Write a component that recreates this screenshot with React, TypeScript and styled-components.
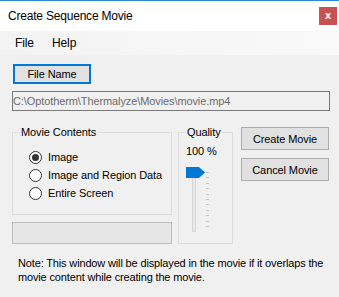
import React from 'react';
import styled, { createGlobalStyle } from 'styled-components';

const GlobalStyle = createGlobalStyle`
  html, body {
    margin: 0;
    padding: 0;
    background: #f0f0f0;
  }
`;

const Window = styled.div`
  width: 339px;
  height: 297px;
  background: #f0f0f0;
  font-family: "Liberation Sans", Arial, sans-serif;
  font-size: 11px;
  letter-spacing: -0.1px;
  color: #000;
  overflow: hidden;
`;

const TitleBar = styled.div`
  height: 30px;
  border-top: 1px solid #2b88d8;
  background: #fff;
  display: flex;
  align-items: center;
  justify-content: space-between;
  padding: 0 2px 0 8px;
`;

const Title = styled.span`
  font-size: 12px;
  letter-spacing: -0.2px;
  color: #000;
`;

const CloseButton = styled.div`
  width: 18px;
  height: 18px;
  background: #c75050;
  color: #fff;
  font-weight: bold;
  font-size: 11px;
  line-height: 16px;
  text-align: center;
  letter-spacing: 0;
`;

const MenuBar = styled.div`
  height: 24px;
  display: flex;
  align-items: center;
  padding-left: 6px;
  background: linear-gradient(to right, #f3f3f3, #f9f9f9);
`;

const MenuItem = styled.span`
  font-size: 12px;
  padding: 0 9px;
`;

const Content = styled.div`
  display: flex;
  flex-direction: column;
  align-items: flex-start;
  padding: 9px 9px 0 12px;
`;

const FileButton = styled.div`
  box-sizing: border-box;
  width: 78px;
  height: 20px;
  margin-left: 1px;
  border: 2px solid #0078d7;
  background: #e1e1e1;
  display: flex;
  align-items: center;
  justify-content: center;
`;

const PathBox = styled.div`
  box-sizing: border-box;
  width: 318px;
  height: 20px;
  margin-top: 7px;
  border: 1px solid #7a7a7a;
  color: #6d6d6d;
  display: flex;
  align-items: center;
  white-space: nowrap;
`;

const MainRow = styled.div`
  display: flex;
  align-items: flex-start;
  margin-top: 15px;
`;

const LeftColumn = styled.div`
  display: flex;
  flex-direction: column;
  width: 160px;
`;

const Group = styled.fieldset<{ h: number }>`
  box-sizing: border-box;
  margin: 0;
  padding: 0;
  min-inline-size: 0;
  height: ${(p) => p.h}px;
  border: 1px solid #dcdcdc;
`;

const Legend = styled.legend`
  margin-left: 7px;
  padding: 0 1px;
  line-height: 13px;
`;

const RadioList = styled.div`
  display: flex;
  flex-direction: column;
  padding: 9px 0 0 16px;
`;

const RadioRow = styled.div`
  display: flex;
  align-items: center;
  height: 18px;
  gap: 6px;
`;

const RadioCircle = styled.span<{ checked?: boolean }>`
  box-sizing: border-box;
  width: 13px;
  height: 13px;
  border: 1px solid #333;
  border-radius: 50%;
  background: #fff;
  display: flex;
  align-items: center;
  justify-content: center;
  &::after {
    content: '';
    display: ${(p) => (p.checked ? 'block' : 'none')};
    width: 7px;
    height: 7px;
    border-radius: 50%;
    background: #333;
  }
`;

const Progress = styled.div`
  box-sizing: border-box;
  height: 22px;
  margin-top: 7px;
  border: 1px solid #bcbcbc;
  background: #e6e6e6;
`;

const QualityGroup = styled(Group)`
  width: 55px;
  margin-left: 6px;
`;

const QualityBody = styled.div`
  display: flex;
  flex-direction: column;
  padding: 6px 0 0 7px;
`;

const Percent = styled.span`
  line-height: 13px;
`;

const Slider = styled.div`
  position: relative;
  width: 24px;
  height: 66px;
  margin-top: 9px;
`;

const Track = styled.div`
  position: absolute;
  left: 6px;
  top: 10px;
  box-sizing: border-box;
  width: 4px;
  height: 55px;
  background: #e7eaea;
  border: 1px solid #d6d6d6;
`;

const Thumb = styled.svg`
  position: absolute;
  left: 0;
  top: 0;
`;

const Ticks = styled.div`
  position: absolute;
  left: 20px;
  top: 5px;
  height: 55px;
  display: flex;
  flex-direction: column;
  justify-content: space-between;
`;

const Tick = styled.span`
  display: block;
  width: 3px;
  height: 1px;
  background: #c4c4c4;
`;

const ButtonColumn = styled.div`
  display: flex;
  flex-direction: column;
  gap: 8px;
  margin: 1px 0 0 8px;
`;

const ActionButton = styled.div`
  box-sizing: border-box;
  width: 88px;
  height: 23px;
  border: 1px solid #adadad;
  background: #e1e1e1;
  display: flex;
  align-items: center;
  justify-content: center;
`;

const Note = styled.p`
  margin: 12px 0 0 6px;
  line-height: 14px;
  white-space: nowrap;
  letter-spacing: -0.15px;
`;

const radios = ['Image', 'Image and Region Data', 'Entire Screen'];

export default function App() {
  return (
    <Window>
      <GlobalStyle />
      <TitleBar>
        <Title>Create Sequence Movie</Title>
        <CloseButton>x</CloseButton>
      </TitleBar>
      <MenuBar>
        <MenuItem>File</MenuItem>
        <MenuItem>Help</MenuItem>
      </MenuBar>
      <Content>
        <FileButton>File Name</FileButton>
        <PathBox>C:\Optotherm\Thermalyze\Movies\movie.mp4</PathBox>
        <MainRow>
          <LeftColumn>
            <Group h={89}>
              <Legend>Movie Contents</Legend>
              <RadioList>
                {radios.map((r, i) => (
                  <RadioRow key={r}>
                    <RadioCircle checked={i === 0} />
                    <span>{r}</span>
                  </RadioRow>
                ))}
              </RadioList>
            </Group>
            <Progress />
          </LeftColumn>
          <QualityGroup h={118}>
            <Legend>Quality</Legend>
            <QualityBody>
              <Percent>100 %</Percent>
              <Slider>
                <Track />
                <Ticks>
                  {Array.from({ length: 11 }).map((_, i) => (
                    <Tick key={i} />
                  ))}
                </Ticks>
                <Thumb width="19" height="11" viewBox="0 0 19 11">
                  <polygon points="0,0 13,0 19,5.5 13,11 0,11" fill="#0078d7" />
                </Thumb>
              </Slider>
            </QualityBody>
          </QualityGroup>
          <ButtonColumn>
            <ActionButton>Create Movie</ActionButton>
            <ActionButton>Cancel Movie</ActionButton>
          </ButtonColumn>
        </MainRow>
        <Note>
          Note: This window will be displayed in the movie if it overlaps the
          <br />
          movie content while creating the movie.
        </Note>
      </Content>
    </Window>
  );
}
